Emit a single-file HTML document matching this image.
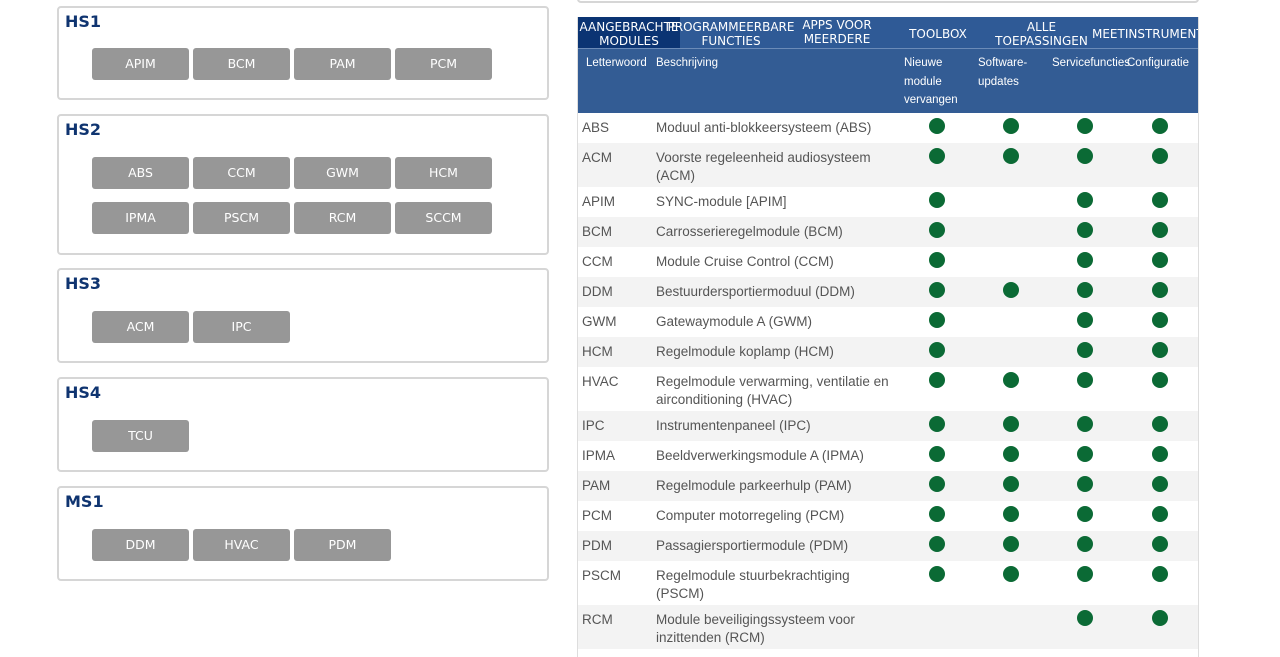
<!DOCTYPE html>
<html><head><meta charset="utf-8"><style>
*{margin:0;padding:0;box-sizing:border-box}
body{width:1280px;height:652px;overflow:hidden;background:#fff;font-family:"Liberation Sans","DejaVu Sans",sans-serif;position:relative}
.box{position:absolute;left:57px;width:492px;border:2px solid #d6d6d6;border-radius:4px;background:#fff}
.box h3{position:absolute;left:6px;top:4px;font-size:16px;font-weight:bold;color:#0f3470;font-family:"DejaVu Sans",sans-serif}
.btn{position:absolute;width:97px;height:32px;background:#979797;border-radius:3px;color:#fff;font-size:12.5px;text-align:center;line-height:32px;font-family:"DejaVu Sans",sans-serif}
#tbl{position:absolute;left:577px;top:17px;width:622px;border-right:1px solid #ddd;border-left:1px solid #ddd;height:640px;overflow:hidden}
.tabs{height:31px;background:#2f5a96;position:relative;color:#fff;font-family:"DejaVu Sans",sans-serif;font-size:12px;text-transform:uppercase;overflow:hidden}
.tab{position:absolute;top:0;height:31px;text-align:center;line-height:14px;display:flex;align-items:center;justify-content:center;white-space:nowrap;padding-top:3px}
.hdr{height:65px;background:#335c94;border-top:1px solid #6b8bb8;position:relative;color:#fff;font-size:11.5px;line-height:18.5px}
.hdr div{position:absolute;top:5px}
.row{position:relative;color:#555;font-size:13.5px;line-height:17.5px}
.row:nth-child(even){background:#f3f3f3}
.row .a{position:absolute;left:4px;top:6px}
.row .d{position:absolute;left:78px;top:6px;width:240px}
.dot{position:absolute;top:5px;width:16px;height:16px;border-radius:50%;background:#0b6a35}
</style></head><body>
<div style="position:absolute;left:577px;top:-5px;width:622px;height:8px;border:2px solid #d6d6d6;border-radius:4px"></div>

<div class="box" style="top:6px;height:94px"><h3>HS1</h3>
<div class="btn" style="left:33px;top:40px">APIM</div><div class="btn" style="left:134px;top:40px">BCM</div><div class="btn" style="left:235px;top:40px">PAM</div><div class="btn" style="left:336px;top:40px">PCM</div></div>
<div class="box" style="top:114px;height:141px"><h3>HS2</h3>
<div class="btn" style="left:33px;top:41px">ABS</div><div class="btn" style="left:134px;top:41px">CCM</div><div class="btn" style="left:235px;top:41px">GWM</div><div class="btn" style="left:336px;top:41px">HCM</div>
<div class="btn" style="left:33px;top:86px">IPMA</div><div class="btn" style="left:134px;top:86px">PSCM</div><div class="btn" style="left:235px;top:86px">RCM</div><div class="btn" style="left:336px;top:86px">SCCM</div></div>
<div class="box" style="top:268px;height:95px"><h3>HS3</h3>
<div class="btn" style="left:33px;top:41px">ACM</div><div class="btn" style="left:134px;top:41px">IPC</div></div>
<div class="box" style="top:377px;height:95px"><h3>HS4</h3>
<div class="btn" style="left:33px;top:41px">TCU</div></div>
<div class="box" style="top:486px;height:95px"><h3>MS1</h3>
<div class="btn" style="left:33px;top:41px">DDM</div><div class="btn" style="left:134px;top:41px">HVAC</div><div class="btn" style="left:235px;top:41px">PDM</div></div>

<div id="tbl">
<div class="tabs">
<div class="tab" style="left:0;width:102px;background:#0b3473">AANGEBRACHTE<br>MODULES</div>
<div class="tab" style="left:102px;width:102px">PROGRAMMEERBARE<br>FUNCTIES</div>
<div class="tab" style="left:204px;width:110px;align-items:flex-start;padding-top:1px">APPS VOOR<br>MEERDERE<br>MODULES</div>
<div class="tab" style="left:318px;width:84px">TOOLBOX</div>
<div class="tab" style="left:405px;width:117px">ALLE<br>TOEPASSINGEN</div>
<div class="tab" style="left:514px;width:130px;justify-content:flex-start">MEETINSTRUMENTEN</div>
</div>
<div class="hdr">
<div style="left:8px">Letterwoord</div><div style="left:78px">Beschrijving</div>
<div style="left:326px">Nieuwe<br>module<br>vervangen</div>
<div style="left:400px">Software-<br>updates</div>
<div style="left:474px">Servicefuncties</div>
<div style="left:549px">Configuratie</div>
</div>
<div id="rows">
<div class="row" style="height:30px"><span class="a">ABS</span><span class="d">Moduul anti-blokkeersysteem (ABS)</span><i class="dot" style="left:351px"></i><i class="dot" style="left:425px"></i><i class="dot" style="left:499px"></i><i class="dot" style="left:574px"></i></div>
<div class="row" style="height:44px"><span class="a">ACM</span><span class="d">Voorste regeleenheid audiosysteem (ACM)</span><i class="dot" style="left:351px"></i><i class="dot" style="left:425px"></i><i class="dot" style="left:499px"></i><i class="dot" style="left:574px"></i></div>
<div class="row" style="height:30px"><span class="a">APIM</span><span class="d">SYNC-module [APIM]</span><i class="dot" style="left:351px"></i><i class="dot" style="left:499px"></i><i class="dot" style="left:574px"></i></div>
<div class="row" style="height:30px"><span class="a">BCM</span><span class="d">Carrosserieregelmodule (BCM)</span><i class="dot" style="left:351px"></i><i class="dot" style="left:499px"></i><i class="dot" style="left:574px"></i></div>
<div class="row" style="height:30px"><span class="a">CCM</span><span class="d">Module Cruise Control (CCM)</span><i class="dot" style="left:351px"></i><i class="dot" style="left:499px"></i><i class="dot" style="left:574px"></i></div>
<div class="row" style="height:30px"><span class="a">DDM</span><span class="d">Bestuurdersportiermoduul (DDM)</span><i class="dot" style="left:351px"></i><i class="dot" style="left:425px"></i><i class="dot" style="left:499px"></i><i class="dot" style="left:574px"></i></div>
<div class="row" style="height:30px"><span class="a">GWM</span><span class="d">Gatewaymodule A (GWM)</span><i class="dot" style="left:351px"></i><i class="dot" style="left:499px"></i><i class="dot" style="left:574px"></i></div>
<div class="row" style="height:30px"><span class="a">HCM</span><span class="d">Regelmodule koplamp (HCM)</span><i class="dot" style="left:351px"></i><i class="dot" style="left:499px"></i><i class="dot" style="left:574px"></i></div>
<div class="row" style="height:44px"><span class="a">HVAC</span><span class="d">Regelmodule verwarming, ventilatie en airconditioning (HVAC)</span><i class="dot" style="left:351px"></i><i class="dot" style="left:425px"></i><i class="dot" style="left:499px"></i><i class="dot" style="left:574px"></i></div>
<div class="row" style="height:30px"><span class="a">IPC</span><span class="d">Instrumentenpaneel (IPC)</span><i class="dot" style="left:351px"></i><i class="dot" style="left:425px"></i><i class="dot" style="left:499px"></i><i class="dot" style="left:574px"></i></div>
<div class="row" style="height:30px"><span class="a">IPMA</span><span class="d">Beeldverwerkingsmodule A (IPMA)</span><i class="dot" style="left:351px"></i><i class="dot" style="left:425px"></i><i class="dot" style="left:499px"></i><i class="dot" style="left:574px"></i></div>
<div class="row" style="height:30px"><span class="a">PAM</span><span class="d">Regelmodule parkeerhulp (PAM)</span><i class="dot" style="left:351px"></i><i class="dot" style="left:425px"></i><i class="dot" style="left:499px"></i><i class="dot" style="left:574px"></i></div>
<div class="row" style="height:30px"><span class="a">PCM</span><span class="d">Computer motorregeling (PCM)</span><i class="dot" style="left:351px"></i><i class="dot" style="left:425px"></i><i class="dot" style="left:499px"></i><i class="dot" style="left:574px"></i></div>
<div class="row" style="height:30px"><span class="a">PDM</span><span class="d">Passagiersportiermodule (PDM)</span><i class="dot" style="left:351px"></i><i class="dot" style="left:425px"></i><i class="dot" style="left:499px"></i><i class="dot" style="left:574px"></i></div>
<div class="row" style="height:44px"><span class="a">PSCM</span><span class="d">Regelmodule stuurbekrachtiging (PSCM)</span><i class="dot" style="left:351px"></i><i class="dot" style="left:425px"></i><i class="dot" style="left:499px"></i><i class="dot" style="left:574px"></i></div>
<div class="row" style="height:44px"><span class="a">RCM</span><span class="d">Module beveiligingssysteem voor inzittenden (RCM)</span><i class="dot" style="left:499px"></i><i class="dot" style="left:574px"></i></div>
</div>
</div>
</body></html>
